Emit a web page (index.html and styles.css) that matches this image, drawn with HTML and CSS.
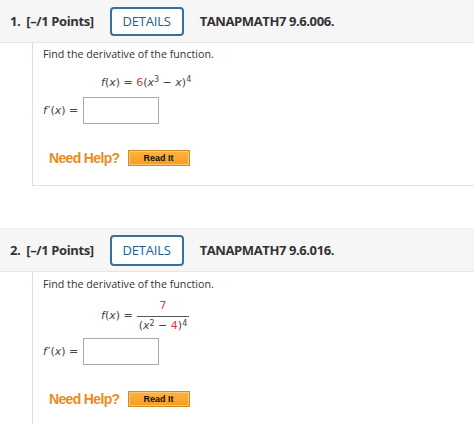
FILE: index.html
```html
<!DOCTYPE html>
<html>
<head>
<meta charset="utf-8">
<link rel="stylesheet" href="styles.css">
</head>
<body>
<div class="question first">
  <div class="qhead">
    <span class="qnum">1.&nbsp; [–/1 Points]</span>
    <span class="details">DETAILS</span>
    <span class="qid">TANAPMATH7 9.6.006.</span>
  </div>
  <div class="qbody">
    <p class="prompt">Find the derivative of the function.</p>
    <div class="math line1"><i>f</i>(<i>x</i>) = <span class="red">6</span>(<i>x</i><sup>3</sup> − <i>x</i>)<sup>4</sup></div>
    <div class="answer">
      <span class="math"><i>f</i><span class="prime">′</span>(<i>x</i>) =</span>
      <span class="box"></span>
    </div>
    <div class="help">
      <span class="needhelp">Need Help?</span>
      <span class="readit">Read It</span>
    </div>
  </div>
</div>

<div class="question second">
  <div class="qhead">
    <span class="qnum">2.&nbsp; [–/1 Points]</span>
    <span class="details">DETAILS</span>
    <span class="qid">TANAPMATH7 9.6.016.</span>
  </div>
  <div class="qbody">
    <p class="prompt">Find the derivative of the function.</p>
    <div class="math line2">
      <span class="lhs"><i>f</i>(<i>x</i>) =</span>
      <span class="frac">
        <span class="num red">7</span>
        <span class="den">(<i>x</i><sup>2</sup> − <span class="red">4</span>)<sup>4</sup></span>
      </span>
    </div>
    <div class="answer a2">
      <span class="math"><i>f</i><span class="prime">′</span>(<i>x</i>) =</span>
      <span class="box"></span>
    </div>
    <div class="help">
      <span class="needhelp">Need Help?</span>
      <span class="readit">Read It</span>
    </div>
  </div>
</div>
</body>
</html>
```

FILE: styles.css
```css
html, body {
  margin: 0;
  padding: 0;
  background: #ffffff;
}
body {
  width: 474px;
  height: 424px;
  overflow: hidden;
  font-family: "Open Sans", "DejaVu Sans", sans-serif;
  color: #333333;
}
.question.first {
  margin-top: -1px;
}
.question.second {
  margin-top: 42px;
}
.qhead {
  height: 44px;
  box-sizing: border-box;
  background: #f6f6f6;
  border-bottom: 1px solid #e6e6e6;
  display: flex;
  align-items: center;
  padding-left: 10px;
  padding-top: 1px;
  font-size: 13px;
}
.second .qhead {
  border-top: 1px solid #efefef;
  padding-top: 0;
}
.qnum, .qid {
  font-weight: 700;
  letter-spacing: -0.4px;
  color: #333333;
}
.details {
  margin-left: 16px;
  margin-right: 16px;
  width: 74px;
  height: 29px;
  box-sizing: border-box;
  border: 2px solid #3a6f9c;
  border-radius: 4px;
  background: #ffffff;
  color: #235d8e;
  display: flex;
  align-items: center;
  justify-content: center;
  font-size: 13px;
  letter-spacing: -0.2px;
}
.second .details {
  height: 31px;
}
.qbody {
  margin-left: 32px;
  border-left: 1px solid #dddddd;
  border-bottom: 1px solid #e2e2e2;
  padding: 0 0 19px 10px;
}
.prompt {
  margin: 0;
  padding-top: 3px;
  font-size: 10.7px;
  line-height: 16px;
  color: #333333;
}
.second .prompt {
  padding-top: 4px;
}
.math {
  font-family: "DejaVu Sans", sans-serif;
  font-size: 11px;
  color: #444444;
}
.math i {
  font-style: oblique;
}
.prime {
  margin-left: 1px;
}
.math sup {
  font-size: 8px;
  line-height: 0;
  vertical-align: 4px;
}
.den sup {
  vertical-align: 3px;
}
.red {
  color: #dd3b3e;
}
.line1 {
  margin-top: 13px;
  margin-left: 58px;
  line-height: 16px;
}
.line2 {
  margin-top: 7px;
  margin-left: 58px;
  display: flex;
  align-items: center;
}
.lhs {
  margin-right: 4px;
}
.frac {
  display: inline-flex;
  flex-direction: column;
  align-items: center;
}
.num {
  line-height: 14px;
  padding-bottom: 3px;
  align-self: stretch;
  text-align: center;
  border-bottom: 1px solid #555555;
}
.den {
  line-height: 12px;
  padding: 3px 2px 0;
}
.answer {
  margin-top: 6px;
  display: flex;
  align-items: center;
}
.answer.a2 {
  margin-top: 6px;
}
.box {
  margin-left: 5px;
  width: 76px;
  height: 27px;
  box-sizing: border-box;
  border: 1px solid #aaaaaa;
  background: #ffffff;
}
.help {
  margin-top: 26px;
  margin-left: 6px;
  display: flex;
  align-items: center;
  height: 16px;
}
.needhelp {
  font-family: "Liberation Sans", Arial, sans-serif;
  font-weight: 700;
  font-size: 14px;
  letter-spacing: -0.65px;
  color: #ea8a22;
}
.readit {
  margin-left: 8px;
  width: 62px;
  height: 16px;
  box-sizing: border-box;
  border: 1px solid #d4891f;
  box-shadow: inset 0 0 0 1px #fdc870;
  background: linear-gradient(#fbb443, #f59d20);
  display: flex;
  align-items: center;
  justify-content: center;
  font-family: "Liberation Sans", Arial, sans-serif;
  font-weight: 700;
  font-size: 9px;
  color: #111111;
}
```
